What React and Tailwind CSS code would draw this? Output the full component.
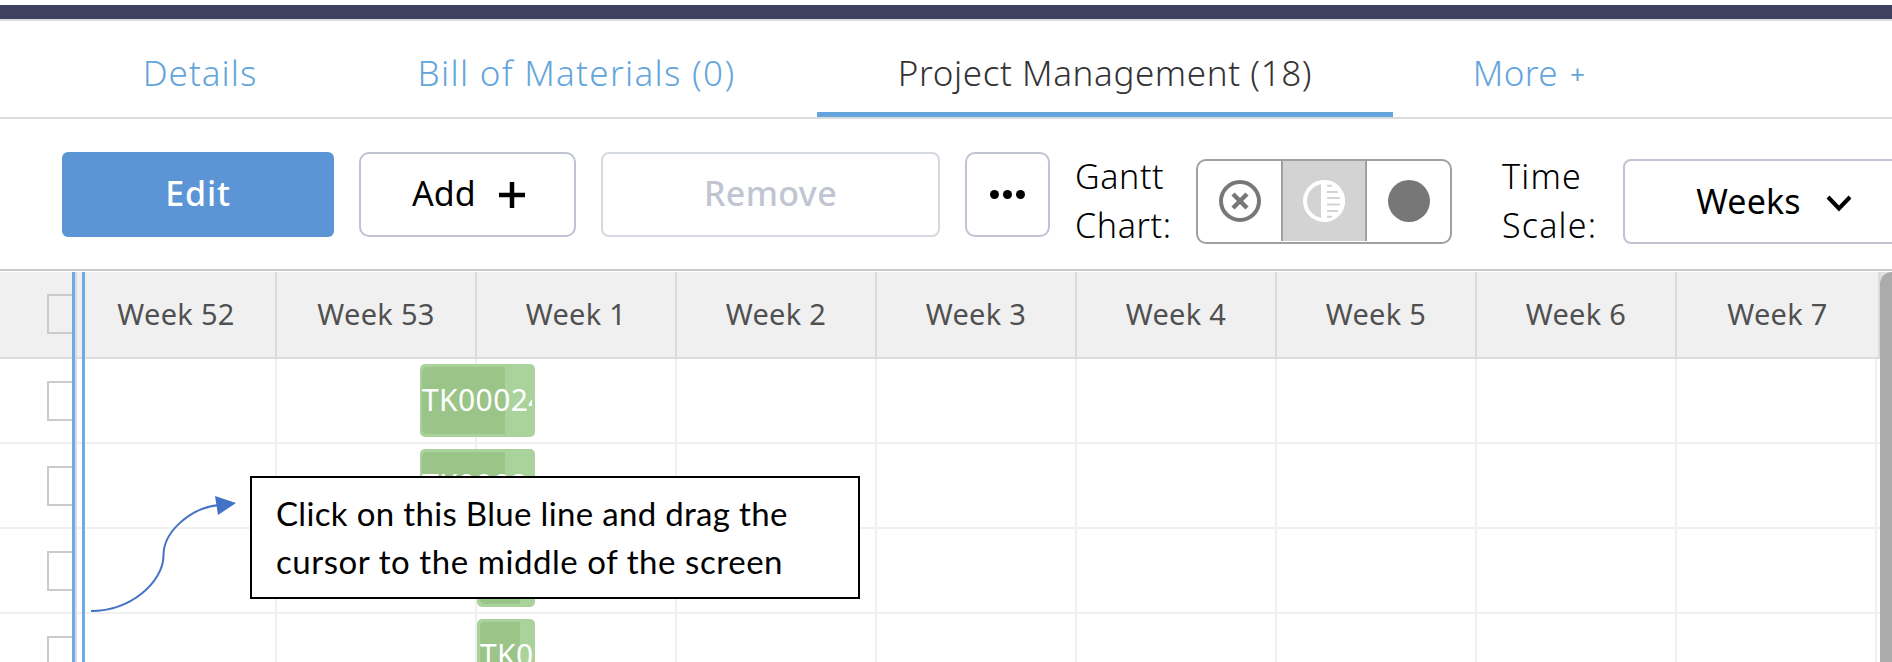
import { useState } from 'react';

const TABS = [
  { id: 'details', label: 'Details', width: 'w-[272px]', spacing: 'tracking-[1px]' },
  { id: 'bom', label: 'Bill of Materials (0)', width: 'w-[481px]', spacing: 'tracking-[1.3px]' },
  { id: 'pm', label: 'Project Management (18)', width: 'w-[576px]', spacing: 'tracking-[0.6px]' },
  { id: 'more', label: 'More', suffix: '+', width: 'w-[272px]', spacing: 'tracking-[0.4px]' },
];

const WEEKS = ['Week 52', 'Week 53', 'Week 1', 'Week 2', 'Week 3', 'Week 4', 'Week 5', 'Week 6', 'Week 7'];

// offset and sizes are in pixels from the left edge of the timeline
const TASKS = [
  { id: 'TK000240', left: 343, width: 115, done: 83, pad: 2 },
  { id: 'TK000241', left: 343, width: 115, done: 83, pad: 2 },
  { id: 'TK000242', left: 400, width: 58, done: 40, pad: 3 },
  { id: 'TK000243', left: 400, width: 58, done: 40, pad: 3 },
];

function Tabs({ active, onChange }) {
  return (
    <nav className="flex h-[98px] shrink-0 border-b-2 border-[#dcdcdc] pl-16">
      {TABS.map((tab) => (
        <button
          key={tab.id}
          type="button"
          onClick={() => onChange(tab.id)}
          className={`shrink-0 whitespace-nowrap border-b-[5px] pt-[13px] text-[35px] font-light ${tab.width} ${tab.spacing} ${
            active === tab.id ? 'border-[#64a5dc] text-[#333]' : 'border-transparent text-[#64a5dc]'
          }`}
        >
          {tab.label}
          {tab.suffix && (
            <span className="relative -top-0.5 ml-3 text-[26px] font-normal">{tab.suffix}</span>
          )}
        </button>
      ))}
    </nav>
  );
}

function DisplayToggle() {
  return (
    <div className="ml-6 mt-[7px] flex h-[85px] w-64 shrink-0 rounded-[10px] border-2 border-[#a0a0a0] pb-px">
      <button type="button" className="flex w-[83px] items-center justify-center">
        <svg width="42" height="42" viewBox="0 0 42 42" fill="none" stroke="#777" strokeWidth="4">
          <circle cx="21" cy="21" r="19" />
          <path d="M14 14 28 28M28 14 14 28" strokeWidth="4.5" />
        </svg>
      </button>
      <button
        type="button"
        className="flex w-[86px] items-center justify-center border-x-2 border-[#a0a0a0] bg-[#d3d3d3]"
      >
        <svg width="42" height="42" viewBox="0 0 42 42" fill="none">
          <path d="M21 0a21 21 0 0 1 0 42z" fill="#fff" />
          <circle cx="21" cy="21" r="19" stroke="#fff" strokeWidth="4" />
          <path d="M20.5 2v38" stroke="#fff" strokeWidth="5" />
          <path d="M24 5.7h5M24 12h11M24 18h13M24 24.5h13M24 31h11M24 36.7h5" stroke="#d3d3d3" strokeWidth="2" />
        </svg>
      </button>
      <button type="button" className="flex flex-1 items-center justify-center">
        <span className="size-[42px] rounded-full bg-[#777]" />
      </button>
    </div>
  );
}

function Toolbar() {
  return (
    <div className="flex h-[152px] shrink-0 items-start border-b-2 border-[#c9c9c9] pl-[62px] pt-[33px] text-[34px] text-black">
      <button
        type="button"
        className="h-[85px] w-[272px] shrink-0 rounded-md bg-[#5b95d6] pb-0.5 font-medium tracking-[0.8px] text-white"
      >
        Edit
      </button>
      <button
        type="button"
        className="ml-[25px] flex h-[85px] w-[217px] shrink-0 items-center rounded-[10px] border-2 border-[#bfc3d2] pl-[51px]"
      >
        <span className="w-[62px] pb-0.5">Add</span>
        <svg className="ml-[25px]" width="26" height="26" viewBox="0 0 26 26" stroke="#000" strokeWidth="4.5">
          <path d="M13 0v26M0 13h26" />
        </svg>
      </button>
      <button
        type="button"
        disabled
        className="ml-[25px] h-[85px] w-[339px] shrink-0 rounded-[8px] border-2 border-[#d5d9e0] pb-0.5 font-medium tracking-[0.4px] text-[#c0c5d1]"
      >
        Remove
      </button>
      <button
        type="button"
        className="ml-[25px] flex h-[85px] w-[85px] shrink-0 items-center justify-center gap-[4px] rounded-[10px] border-2 border-[#bfc3d2]"
      >
        <span className="size-[9px] rounded-full bg-black" />
        <span className="size-[9px] rounded-full bg-black" />
        <span className="size-[9px] rounded-full bg-black" />
      </button>
      <span className="ml-[25px] w-[97px] shrink-0 text-[34px] font-light leading-[49px] tracking-[0.6px]">
        Gantt Chart:
      </span>
      <DisplayToggle />
      <span className="ml-[50px] w-[97px] shrink-0 text-[34px] font-light leading-[49px] tracking-[1.2px]">
        Time Scale:
      </span>
      <button
        type="button"
        className="ml-6 mt-[7px] flex h-[85px] w-[300px] shrink-0 items-center rounded-[8px] border-2 border-[#bfc3d2] pl-[70px]"
      >
        <span className="w-[107px] tracking-[0.2px]">Weeks</span>
        <svg className="ml-6 mt-1" width="26" height="17" viewBox="0 0 26 17" fill="none" stroke="#000" strokeWidth="4">
          <path d="m2 2 11 11.5L24 2" />
        </svg>
      </button>
    </div>
  );
}

function CheckCell() {
  return <div className="ml-[47px] mt-[22px] size-10 shrink-0 border-2 border-[#cbcbcb]" />;
}

function TaskBar({ task }) {
  return (
    <div
      className="absolute top-[5px] h-[73px] rounded-[5px] bg-[#aad29b]"
      style={{ left: task.left, width: task.width }}
    >
      <div
        className="absolute top-[3px] h-[67px] rounded-l-[5px] bg-[#9bc489]"
        style={{ left: task.pad, width: task.done }}
      />
      <div
        className="absolute bottom-[2px] right-[3px] top-0 overflow-hidden whitespace-nowrap text-[30px] leading-[72px] tracking-[0.4px] text-white"
        style={{ left: task.pad }}
      >
        {task.id}
      </div>
    </div>
  );
}

function Gantt() {
  return (
    <div className="mt-px flex min-h-0 flex-1">
      <div className="w-[72px] shrink-0 overflow-hidden">
        <div className="flex h-[87px] border-b-2 border-[#dcdcdc] bg-[#f0f0f0]">
          <CheckCell />
        </div>
        {TASKS.map((task) => (
          <div key={task.id} className="flex h-[85px] border-b-2 border-[#f0f0f0]">
            <CheckCell />
          </div>
        ))}
      </div>

      {/* splitter between the list and the timeline */}
      <div className="w-[5px] shrink-0 cursor-col-resize border-l-[3px] border-[#6eaae6] bg-[#dcdcdc]" />

      <div className="relative w-[1803px] shrink-0 overflow-hidden">
        <div className="flex h-[87px] border-b-2 border-[#dcdcdc] bg-[#f0f0f0]">
          {WEEKS.map((week) => (
            <div
              key={week}
              className="flex w-[200px] shrink-0 items-center justify-center border-r-2 border-[#dcdcdc] pb-0.5 text-[29px] tracking-[0.3px] text-[#505050] last:w-[203px]"
            >
              {week}
            </div>
          ))}
        </div>
        {TASKS.map((task) => (
          <div key={task.id} className="relative flex h-[85px] border-b-2 border-[#f0f0f0]">
            {WEEKS.map((week) => (
              <div key={week} className="w-[200px] shrink-0 border-r-2 border-[#f0f0f0] last:w-[203px] last:border-r-0" />
            ))}
            <TaskBar task={task} />
          </div>
        ))}
        <div className="absolute inset-y-0 left-[5px] w-[3px] bg-[#6eaae6]" />
      </div>

      <div className="flex-1 bg-[#e0e0e0]">
        <div className="h-full rounded-tl-xl bg-[#ababab]" />
      </div>
    </div>
  );
}

function Callout() {
  return (
    <>
      <svg className="absolute left-[85px] top-[490px]" width="160" height="130" viewBox="0 0 160 130">
        <path d="M6 121C46 121 78 92 78.500 66C78 42 105 18 134 15" fill="none" stroke="#4472c4" strokeWidth="2" />
        <path d="M130 6 151 13 133 25z" fill="#4472c4" />
      </svg>
      <div className="absolute left-[250px] top-[476px] h-[123px] w-[610px] whitespace-nowrap border-2 border-black bg-white pl-6 pt-[11px] font-['Lato',sans-serif] text-[33px] leading-[48px] text-black">
        <p className="tracking-[0.33px]">Click on this Blue line and drag the</p>
        <p className="tracking-[0.56px]">cursor to the middle of the screen</p>
      </div>
    </>
  );
}

export default function App() {
  const [tab, setTab] = useState('pm');

  return (
    <div className="relative flex h-[662px] w-[1892px] flex-col overflow-hidden bg-white pt-[5px] font-['Noto_Sans',sans-serif]">
      <div className="h-4 shrink-0 border-b-2 border-[#dcdcdc] bg-[#3f4160]" />
      <Tabs active={tab} onChange={setTab} />
      <Toolbar />
      <Gantt />
      <Callout />
    </div>
  );
}
